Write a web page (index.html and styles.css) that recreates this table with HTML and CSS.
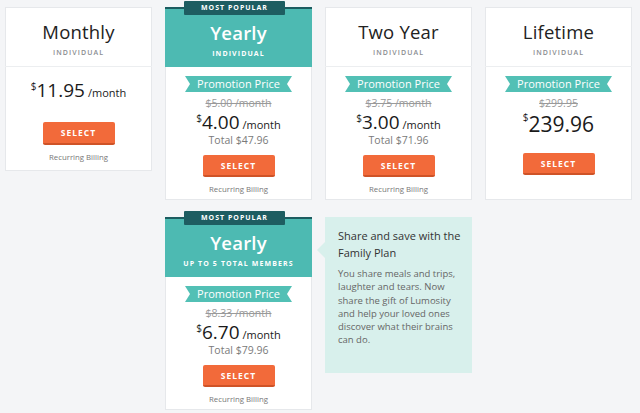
FILE: index.html
```html
<!DOCTYPE html>
<html>
<head>
<meta charset="utf-8">
<link rel="stylesheet" href="styles.css">
</head>
<body>
<div class="grid">
  <div class="card short">
    <div class="head">
      <div class="title">Monthly</div>
      <div class="sub">INDIVIDUAL</div>
    </div>
    <div class="body">
      <div class="price first"><sup>$</sup>11.95<span class="per">/month</span></div>
      <button class="select btn-monthly">SELECT</button>
      <div class="billing">Recurring Billing</div>
    </div>
  </div>

  <div class="card">
    <div class="badge">MOST POPULAR</div>
    <div class="head featured">
      <div class="title">Yearly</div>
      <div class="sub">INDIVIDUAL</div>
    </div>
    <div class="body">
      <div class="ribbon">Promotion Price</div>
      <div class="old">$5.00 /month</div>
      <div class="price"><sup>$</sup>4.00<span class="per">/month</span></div>
      <div class="total">Total $47.96</div>
      <button class="select">SELECT</button>
      <div class="billing">Recurring Billing</div>
    </div>
  </div>

  <div class="card">
    <div class="head">
      <div class="title">Two Year</div>
      <div class="sub">INDIVIDUAL</div>
    </div>
    <div class="body">
      <div class="ribbon">Promotion Price</div>
      <div class="old">$3.75 /month</div>
      <div class="price"><sup>$</sup>3.00<span class="per">/month</span></div>
      <div class="total">Total $71.96</div>
      <button class="select">SELECT</button>
      <div class="billing">Recurring Billing</div>
    </div>
  </div>

  <div class="card">
    <div class="head">
      <div class="title">Lifetime</div>
      <div class="sub">INDIVIDUAL</div>
    </div>
    <div class="body">
      <div class="ribbon">Promotion Price</div>
      <div class="old">$299.95</div>
      <div class="price big"><sup>$</sup>239.96</div>
      <button class="select btn-life">SELECT</button>
    </div>
  </div>

  <div class="spacer"></div>

  <div class="card">
    <div class="badge">MOST POPULAR</div>
    <div class="head featured">
      <div class="title">Yearly</div>
      <div class="sub">UP TO 5 TOTAL MEMBERS</div>
    </div>
    <div class="body">
      <div class="ribbon">Promotion Price</div>
      <div class="old">$8.33 /month</div>
      <div class="price"><sup>$</sup>6.70<span class="per">/month</span></div>
      <div class="total">Total $79.96</div>
      <button class="select">SELECT</button>
      <div class="billing">Recurring Billing</div>
    </div>
  </div>

  <div class="family">
    <div class="fam-title">Share and save with the Family Plan</div>
    <p class="fam-text">You share meals and trips, laughter and tears. Now share the gift of Lumosity and help your loved ones discover what their brains can do.</p>
  </div>
</div>
</body>
</html>
```

FILE: styles.css
```css
* { box-sizing: border-box; }
html, body {
  margin: 0;
  padding: 0;
  background: #f4f5f7;
  font-family: "Open Sans", "Noto Sans", sans-serif;
  color: #222;
}
body { padding: 7px 0 0 5px; width: 640px; height: 413px; overflow: hidden; }

.grid {
  display: grid;
  grid-template-columns: repeat(4, 147px);
  column-gap: 13px;
  row-gap: 17px;
  align-items: start;
}

.card {
  position: relative;
  background: #fff;
  border: 1px solid #e6e8eb;
  height: 193px;
}
.card.short { height: 164px; }

.head {
  height: 60px;
  border-bottom: 1px solid #eceef0;
  text-align: center;
  padding-top: 14px;
  margin: -1px -1px 0;
}
.head.featured {
  background: #4dbab2;
  border-top: 2px solid #1c5c60;
  border-bottom: none;
  color: #fff;
  padding-top: 13px;
}
.title {
  font-size: 18.5px;
  line-height: 22px;
  letter-spacing: 0.2px;
}
.featured .title { font-weight: 600; }
.sub {
  font-size: 7px;
  letter-spacing: 1.1px;
  color: #8a8d90;
  margin-top: 5px;
  font-weight: 600;
}
.featured .sub { color: #fff; font-weight: 700; }

.badge {
  position: absolute;
  top: -7px;
  left: 18px;
  width: 101px;
  height: 14px;
  background: #1e5d61;
  color: #fff;
  font-size: 7px;
  font-weight: 700;
  letter-spacing: 1px;
  line-height: 14px;
  text-align: center;
  border-radius: 1px;
  z-index: 2;
}

.body {
  display: flex;
  flex-direction: column;
  align-items: center;
  padding-top: 9px;
}

.ribbon {
  width: 107px;
  height: 16px;
  background: #52c0b5;
  color: #fff;
  font-size: 11px;
  font-weight: 500;
  line-height: 16px;
  text-align: center;
  clip-path: polygon(0 0, 100% 0, calc(100% - 5px) 50%, 100% 100%, 0 100%, 5px 50%);
}

.old {
  margin-top: 4px;
  font-size: 10.5px;
  line-height: 15px;
  color: #9a9a9a;
  text-decoration: line-through;
}

.price {
  font-size: 19px;
  line-height: 20px;
  height: 20px;
  color: #1a1a1a;
  margin-top: 1px;
}
.price sup {
  font-size: 10px;
  line-height: 1;
  vertical-align: top;
  position: relative;
  top: 1px;
}
.price .per {
  font-size: 11px;
  line-height: 1;
  margin-left: 3px;
}
.price.first { margin-top: 4px; }
.price.big { font-size: 21px; line-height: 26px; height: 26px; margin-top: 0; }

.total {
  font-size: 10.5px;
  line-height: 14px;
  color: #7a7a7a;
  margin-top: 1px;
}

.select {
  width: 72px;
  height: 22px;
  margin-top: 8px;
  border: none;
  border-bottom: 2px solid #cf5327;
  border-radius: 2px;
  background: #f26a3a;
  color: #fff;
  font-family: "Open Sans", "Noto Sans", sans-serif;
  font-weight: 700;
  font-size: 8.5px;
  letter-spacing: 1px;
  padding: 0;
}
.btn-monthly { margin-top: 22px; height: 23px; }
.btn-life { margin-top: 16px; }

.billing {
  margin-top: 7px;
  font-size: 7.8px;
  line-height: 10px;
  color: #777;
}

.spacer { height: 1px; }

.family {
  position: relative;
  background: #d8f0ec;
  height: 156px;
  padding: 10px 8px 0 13px;
}
.family::before {
  content: "";
  position: absolute;
  left: -8px;
  top: 25px;
  border-top: 8px solid transparent;
  border-bottom: 8px solid transparent;
  border-right: 8px solid #d8f0ec;
}
.fam-title {
  font-size: 11px;
  line-height: 17px;
  color: #333;
}
.fam-text {
  margin: 6px 0 0;
  font-size: 9.5px;
  line-height: 13.3px;
  color: #666;
}
```
